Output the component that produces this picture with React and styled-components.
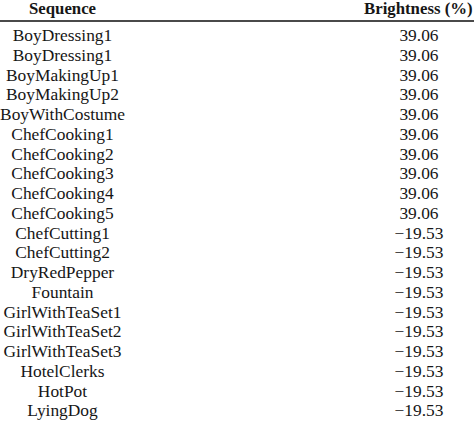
import React from "react";
import styled, { createGlobalStyle } from "styled-components";

const GlobalStyle = createGlobalStyle`
  html, body {
    margin: 0;
    padding: 0;
    background: #fff;
  }
  body {
    font-family: "Liberation Serif", "Times New Roman", serif;
    color: #161616;
  }
`;

const rows = [
  ["BoyDressing1", "39.06"],
  ["BoyDressing1", "39.06"],
  ["BoyMakingUp1", "39.06"],
  ["BoyMakingUp2", "39.06"],
  ["BoyWithCostume", "39.06"],
  ["ChefCooking1", "39.06"],
  ["ChefCooking2", "39.06"],
  ["ChefCooking3", "39.06"],
  ["ChefCooking4", "39.06"],
  ["ChefCooking5", "39.06"],
  ["ChefCutting1", "\u221219.53"],
  ["ChefCutting2", "\u221219.53"],
  ["DryRedPepper", "\u221219.53"],
  ["Fountain", "\u221219.53"],
  ["GirlWithTeaSet1", "\u221219.53"],
  ["GirlWithTeaSet2", "\u221219.53"],
  ["GirlWithTeaSet3", "\u221219.53"],
  ["HotelClerks", "\u221219.53"],
  ["HotPot", "\u221219.53"],
  ["LyingDog", "\u221219.53"],
];

const Table = styled.div`
  width: 474px;
  height: 422px;
  overflow: hidden;
`;

const Head = styled.div`
  display: grid;
  grid-template-columns: 125px 1fr 110px;
  font-weight: 700;
  font-size: 16.8px;
  line-height: 16px;
  padding-top: 1px;
  padding-bottom: 3px;
  border-bottom: 2px solid #4a4a4a;
`;

const HeadCell = styled.div`
  grid-column: ${(p) => p.$col};
  text-align: center;
  white-space: nowrap;
  margin-right: ${(p) => (p.$col === 3 ? "3px" : "0")};
`;

const Body = styled.div`
  padding-top: 4px;
`;

const Row = styled.div`
  display: grid;
  grid-template-columns: 125px 1fr 110px;
  font-size: 17.4px;
  line-height: 19.75px;
  height: 19.75px;
`;

const Cell = styled.div`
  grid-column: ${(p) => p.$col};
  text-align: center;
  white-space: nowrap;
`;

export default function App() {
  return (
    <>
      <GlobalStyle />
      <Table>
        <Head>
          <HeadCell $col={1}>Sequence</HeadCell>
          <HeadCell $col={3}>Brightness (%)</HeadCell>
        </Head>
        <Body>
          {rows.map(([name, value], i) => (
            <Row key={i}>
              <Cell $col={1}>{name}</Cell>
              <Cell $col={3}>{value}</Cell>
            </Row>
          ))}
        </Body>
      </Table>
    </>
  );
}
